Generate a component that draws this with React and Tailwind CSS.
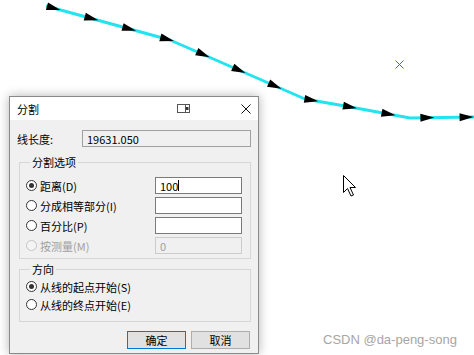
import React from "react";

const PTS = [[46, 6], [170, 40], [305, 99], [345, 106], [410, 118], [474, 117]];

function pointAt(d) {
  let acc = 0;
  for (let i = 0; i < PTS.length - 1; i++) {
    const [x1, y1] = PTS[i];
    const [x2, y2] = PTS[i + 1];
    const len = Math.hypot(x2 - x1, y2 - y1);
    if (d <= acc + len || i === PTS.length - 2) {
      const t = (d - acc) / len;
      const ang = (Math.atan2(y2 - y1, x2 - x1) * 180) / Math.PI;
      return [x1 + (x2 - x1) * t, y1 + (y2 - y1) * t, ang];
    }
    acc += len;
  }
  return [0, 0, 0];
}

function Radio({ checked, disabled }) {
  return (
    <span
      className={
        "w-[11px] h-[11px] rounded-full border flex items-center justify-center shrink-0 " +
        (disabled ? "border-[#c4c4c4] bg-[#f4f4f4]" : "border-[#333333] bg-white")
      }
    >
      {checked && <span className="w-[5px] h-[5px] rounded-full bg-[#333333]" />}
    </span>
  );
}

function OptionRow({ label, checked, disabled, value, caret }) {
  return (
    <div className="flex items-center h-[17px]">
      <div className="flex-1 flex items-center gap-[3px]">
        <Radio checked={checked} disabled={disabled} />
        <span className={disabled ? "text-[#a0a0a0]" : "text-black"}>{label}</span>
      </div>
      <div
        className={
          "w-[87px] h-[17px] border flex items-center pl-[4px] " +
          (disabled ? "border-[#cccccc] bg-[#f0f0f0] text-[#a0a0a0]" : "border-[#7a7a7a] bg-white text-black")
        }
      >
        {value}
        {caret && <span className="w-[1px] h-[11px] bg-black" />}
      </div>
    </div>
  );
}

export default function App() {
  const arrows = [];
  for (let i = 0; i < 12; i++) {
    arrows.push(pointAt(1 + i * 39.2 + 7));
  }
  return (
    <div className="relative w-[474px] h-[355px] bg-white overflow-hidden font-['Noto_Sans_CJK_SC',sans-serif]">
      <svg className="absolute left-0 top-0" width="474" height="355">
        <polyline
          points={PTS.map((p) => p.join(",")).join(" ")}
          fill="none"
          stroke="#22e4f0"
          strokeWidth="3"
          strokeLinejoin="round"
        />
        {arrows.map(([x, y, a], i) => (
          <polygon
            key={i}
            points="-7,-4 7,0 -7,4"
            transform={`translate(${x} ${y}) rotate(${a})`}
            fill="#000"
          />
        ))}
        <path d="M395.5 60.5 L403.5 68.5 M403.5 60.5 L395.5 68.5" stroke="#5a5ab0" strokeWidth="1" />
        <path
          d="M343.5 175.5 L343.5 192.5 L347.5 188.5 L351 196 L353.5 195 L350 187.5 L355.5 187.5 Z"
          fill="#fff"
          stroke="#000"
          strokeWidth="1"
          strokeLinejoin="miter"
        />
      </svg>

      <div className="absolute left-[9px] top-[96px] w-[250px] h-[258px] border border-[#8a8a8a] bg-white shadow-[0_0_10px_rgba(0,0,0,0.3)] flex flex-col text-[11px] leading-[14px]">
        <div className="h-[23px] flex items-center pl-[7px] pr-[7px] bg-white">
          <span className="text-black text-[11px]">分割</span>
          <span className="flex-1" />
          <svg width="13" height="9" viewBox="0 0 13 9" className="mr-[51px]">
            <rect x="0.5" y="0.5" width="12" height="8" fill="none" stroke="#555" strokeWidth="1" />
            <path d="M8.5 0.5 V8.5" stroke="#555" strokeWidth="1" />
            <rect x="9" y="3" width="2.5" height="3" fill="#333" />
          </svg>
          <svg width="10" height="10" viewBox="0 0 10 10">
            <path d="M0.5 0.5 L9.5 9.5 M9.5 0.5 L0.5 9.5" stroke="#111" strokeWidth="1" />
          </svg>
        </div>

        <div className="flex-1 bg-[#f0f0f0] flex flex-col pt-[10px]">
          <div className="flex items-center pl-[7px] pr-[7px] h-[17px]">
            <span className="w-[65px] text-black">线长度:</span>
            <div className="flex-1 h-[17px] border border-[#a0a0a0] bg-[#f0f0f0] flex items-center pl-[4px] text-black">
              19631.050
            </div>
          </div>

          <fieldset className="mt-[8px] ml-[9px] mr-[7px] border border-[#d6d6d6] pt-[8px] pb-[4px] pl-[6px] pr-[8px] flex flex-col gap-[3px]">
            <legend className="ml-[4px] px-[2px] leading-[14px] text-black">分割选项</legend>
            <OptionRow label="距离(D)" checked value="100" caret />
            <OptionRow label="分成相等部分(I)" />
            <OptionRow label="百分比(P)" />
            <OptionRow label="按测量(M)" disabled value="0" />
          </fieldset>

          <fieldset className="mt-[3px] ml-[9px] mr-[7px] border border-[#d6d6d6] pt-[2px] pb-[8px] pl-[6px] pr-[8px] flex flex-col gap-[1px]">
            <legend className="ml-[4px] px-[2px] leading-[14px] text-black">方向</legend>
            <div className="flex items-center h-[17px] gap-[3px]">
              <Radio checked />
              <span>从线的起点开始(S)</span>
            </div>
            <div className="flex items-center h-[17px] gap-[3px]">
              <Radio />
              <span>从线的终点开始(E)</span>
            </div>
          </fieldset>

          <div className="mt-[9px] flex justify-end gap-[5px] pr-[8px]">
            <div className="w-[59px] h-[18px] border border-[#0078d7] bg-[#e1e1e1] flex items-center justify-center text-black">
              确定
            </div>
            <div className="w-[59px] h-[18px] border border-[#adadad] bg-[#e1e1e1] flex items-center justify-center text-black">
              取消
            </div>
          </div>
        </div>
      </div>

      <div className="absolute left-[323px] top-[332px] text-[13px] leading-[16px] text-[#a6a6a6] font-['Liberation_Sans',Arial,sans-serif]">
        CSDN @da-peng-song
      </div>
    </div>
  );
}
